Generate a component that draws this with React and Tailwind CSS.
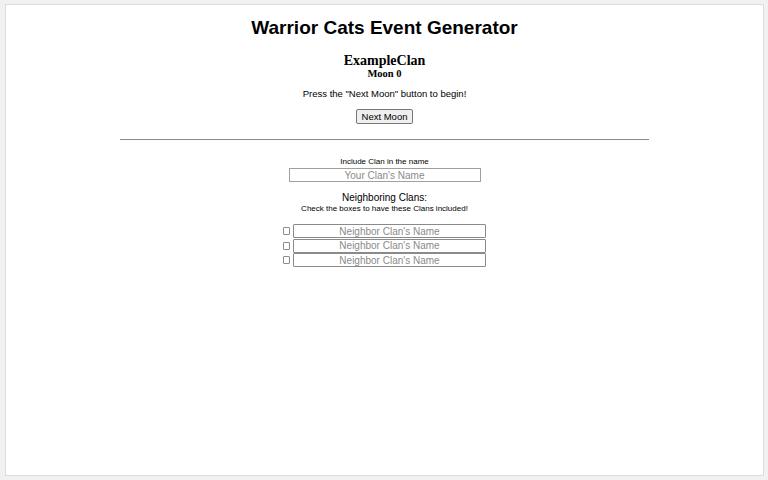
export default function App() {
  const neighbors = [0, 1, 2];
  return (
    <div className="h-[480px] w-[768px] bg-[#f1f1f1] pt-[4px] pl-[5px]" style={{ fontFamily: '"Liberation Sans", Arial, sans-serif' }}>
      <div className="flex h-[472px] w-[759px] flex-col items-center border border-[#dcdcdc] bg-white text-black">
        <h1 className="mt-[11px] text-[19px] font-bold leading-[24px]">Warrior Cats Event Generator</h1>
        <div className="mt-[13px] flex flex-col items-center" style={{ fontFamily: '"Liberation Serif", "DejaVu Serif", serif' }}>
          <div className="text-[14px] font-bold leading-[15px]">ExampleClan</div>
          <div className="text-[10.5px] font-bold leading-[12px]">Moon 0</div>
        </div>
        <p className="mt-[8px] text-[9.5px] leading-[12px]">Press the "Next Moon" button to begin!</p>
        <button className="mt-[9px] h-[15px] rounded-[2px] border border-[#767676] bg-[#efefef] px-[5px] text-[9.5px] leading-[12px]">Next Moon</button>
        <hr className="mt-[15px] w-[70%] border-t border-[#8a8a8a]" />
        <div className="mt-[17px] text-[8px] leading-[10px]">Include Clan in the name</div>
        <input
          className="mt-[1px] h-[14px] w-[192px] border border-[#a0a0a0] text-center text-[10px] placeholder:text-[#8a8a8a] outline-none"
          placeholder="Your Clan's Name"
        />
        <div className="mt-[10px] text-[10px] leading-[12px]">Neighboring Clans:</div>
        <div className="mt-[0px] text-[8px] leading-[10px]">Check the boxes to have these Clans included!</div>
        <div className="mt-[10px] flex flex-col">
          {neighbors.map((n) => (
            <div key={n} className="flex h-[14.5px] items-center gap-[3px]">
              <input type="checkbox" className="m-0 h-[8px] w-[7px] appearance-none rounded-[1px] border border-[#8c8c8c] bg-white" />
              <input
                className="h-[14px] w-[193px] rounded-[1px] border border-[#8a8a8a] text-center text-[10px] placeholder:text-[#8a8a8a] outline-none"
                placeholder="Neighbor Clan's Name"
              />
            </div>
          ))}
        </div>
      </div>
    </div>
  );
}
